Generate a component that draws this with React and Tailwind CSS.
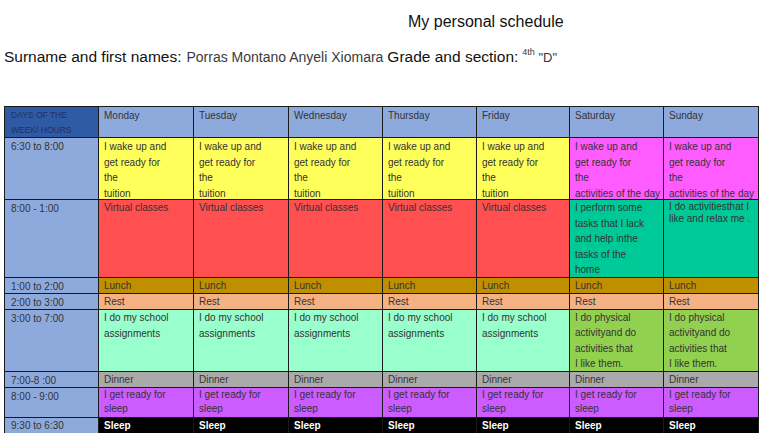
import { Fragment } from "react";

const YELLOW = "bg-[#ffff5c]";
const MAGENTA = "bg-[#ff5cff]";
const RED = "bg-[#ff4f50]";
const TEAL = "bg-[#00c998]";
const LUNCH = "bg-[#bf8f00]";
const REST = "bg-[#f4b183]";
const MINT = "bg-[#99ffcc]";
const GREEN = "bg-[#92d050]";
const GREY = "bg-[#aaaaaa]";
const PURPLE = "bg-[#cc5cff]";

const days = ["Monday", "Tuesday", "Wednesday", "Thursday", "Friday", "Saturday", "Sunday"];

const weekdays = (text, bg, lead) => Array.from({ length: 5 }, () => ({ text, bg, lead }));
const both = (text, bg, lead) => [{ text, bg, lead }, { text, bg, lead }];

const rows = [
  {
    time: "6:30 to 8:00",
    cells: [
      ...weekdays(["I wake up and", "get ready for", "the", "tuition"], YELLOW, "leading-[15.5px] pt-px"),
      ...both(["I wake up and", "get ready for", "the", "activities of the day"], MAGENTA, "leading-[15.5px] pt-px"),
    ],
  },
  {
    time: "8:00 - 1:00",
    cells: [
      ...weekdays(["Virtual classes"], RED, "leading-[15.5px]"),
      {
        text: ["I perform some", "tasks that I lack", "and help inthe", "tasks of the", "home"],
        bg: TEAL,
        lead: "leading-[15.5px]",
      },
      { text: ["I do activitiesthat I", "like and relax me ."], bg: TEAL, lead: "leading-[12px] pt-px" },
    ],
  },
  { time: "1:00 to 2:00", cells: [...weekdays(["Lunch"], LUNCH, "leading-[15px]"), ...both(["Lunch"], LUNCH, "leading-[15px]")] },
  { time: "2:00 to 3:00", cells: [...weekdays(["Rest"], REST, "leading-[15px]"), ...both(["Rest"], REST, "leading-[15px]")] },
  {
    time: "3:00 to 7:00",
    cells: [
      ...weekdays(["I do my school", "assignments"], MINT, "leading-[16px]"),
      ...both(["I do physical", "activityand do", "activities that", "I like them."], GREEN, "leading-[15.3px]"),
    ],
  },
  { time: "7:00-8 :00", cells: [...weekdays(["Dinner"], GREY, "leading-[15px]"), ...both(["Dinner"], GREY, "leading-[15px]")] },
  {
    time: "8:00 - 9:00",
    cells: [...weekdays(["I get ready for", "sleep"], PURPLE, "leading-[14px]"), ...both(["I get ready for", "sleep"], PURPLE, "leading-[14px]")],
  },
];

function Cell({ cell }) {
  return (
    <div className={`${cell.bg} ${cell.lead} px-[5px] text-[10px] text-[#333333] whitespace-nowrap overflow-hidden`}>
      {cell.text.map((line, i) => (
        <div key={i}>{line}</div>
      ))}
    </div>
  );
}

export default function App() {
  return (
    <div className="w-[768px] h-[433px] overflow-hidden bg-white font-['Liberation_Sans',Arial,sans-serif]">
      {/* Title */}
      <div className="pt-3 pl-[408px] text-[16px] leading-5 text-[#111]">My personal schedule</div>

      {/* Student info */}
      <div className="mt-[15px] pl-1 h-5 flex items-baseline whitespace-nowrap leading-5">
        <span className="text-[15.5px] text-[#111]">Surname and first names:</span>
        <span className="ml-[5px] text-[14px] text-[#3a3a3a]">Porras Montano Anyeli Xiomara</span>
        <span className="ml-[4px] text-[15.5px] text-[#111]">Grade and section:</span>
        <span className="ml-[4px] text-[13px] text-[#3a3a3a]">
          <span className="text-[9px] relative -top-[7px]">4th</span> "D"
        </span>
      </div>

      {/* Schedule table */}
      <div className="mt-[39px] ml-1 w-max border border-[#1a1a1a] bg-[#1a1a1a] grid grid-cols-[93px_94px_94px_93px_93px_92px_93px_94px] grid-rows-[30px_61px_77px_15px_15px_61px_15px_29px_16px] gap-px">
        <div className="bg-[#2f5aa4] px-[6px] pt-px text-[8.5px] leading-[15px] text-[#1f3160]">
          <div>DAYS OF THE</div>
          <div>WEEK/ HOURS</div>
        </div>
        {days.map((d) => (
          <div key={d} className="bg-[#8eaadc] px-[5px] pt-px text-[10px] leading-[15.5px] text-[#333]">
            {d}
          </div>
        ))}

        {rows.map((row) => (
          <Fragment key={row.time}>
            <div className="bg-[#8eaadc] px-[6px] pt-px text-[10px] leading-[15px] text-[#333]">{row.time}</div>
            {row.cells.map((c, i) => (
              <Cell key={i} cell={c} />
            ))}
          </Fragment>
        ))}

        <div className="bg-[#8eaadc] px-[6px] text-[10px] leading-[15px] text-[#333]">9:30 to 6:30</div>
        {days.map((d) => (
          <div key={"s" + d} className="bg-black px-[5px] text-[10px] leading-[15px] font-bold text-white">
            Sleep
          </div>
        ))}
      </div>
    </div>
  );
}
